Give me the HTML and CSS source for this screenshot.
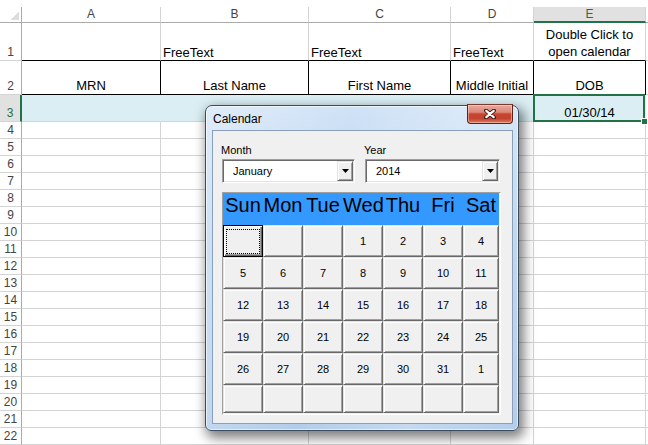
FILE: index.html
```html
<!DOCTYPE html>
<html>
<head>
<meta charset="utf-8">
<title>Calendar</title>
<link rel="stylesheet" href="styles.css">
</head>
<body>
<div class="sheet">
  <div class="corner"></div>
  <div class="ch">A</div><div class="ch">B</div><div class="ch">C</div><div class="ch">D</div><div class="ch csel">E</div><div class="ch f"></div>

  <div class="rh">1</div>
  <div class="c r1"></div>
  <div class="c r1">FreeText</div>
  <div class="c r1">FreeText</div>
  <div class="c r1">FreeText</div>
  <div class="c r1 note">Double Click to<br>open calendar</div>
  <div class="c f"></div>

  <div class="rh">2</div>
  <div class="c r2">MRN</div>
  <div class="c r2">Last Name</div>
  <div class="c r2">First Name</div>
  <div class="c r2">Middle Initial</div>
  <div class="c r2">DOB</div>
  <div class="c f"></div>

  <div class="rh rsel">3</div>
  <div class="c r3"></div>
  <div class="c r3"></div>
  <div class="c r3"></div>
  <div class="c r3"></div>
  <div class="c r3 active">01/30/14<span class="handle"></span></div>
  <div class="c f"></div>

  <div class="rh">4</div><div class="c"></div><div class="c"></div><div class="c"></div><div class="c"></div><div class="c"></div><div class="c f"></div>
  <div class="rh">5</div><div class="c"></div><div class="c"></div><div class="c"></div><div class="c"></div><div class="c"></div><div class="c f"></div>
  <div class="rh">6</div><div class="c"></div><div class="c"></div><div class="c"></div><div class="c"></div><div class="c"></div><div class="c f"></div>
  <div class="rh">7</div><div class="c"></div><div class="c"></div><div class="c"></div><div class="c"></div><div class="c"></div><div class="c f"></div>
  <div class="rh">8</div><div class="c"></div><div class="c"></div><div class="c"></div><div class="c"></div><div class="c"></div><div class="c f"></div>
  <div class="rh">9</div><div class="c"></div><div class="c"></div><div class="c"></div><div class="c"></div><div class="c"></div><div class="c f"></div>
  <div class="rh">10</div><div class="c"></div><div class="c"></div><div class="c"></div><div class="c"></div><div class="c"></div><div class="c f"></div>
  <div class="rh">11</div><div class="c"></div><div class="c"></div><div class="c"></div><div class="c"></div><div class="c"></div><div class="c f"></div>
  <div class="rh">12</div><div class="c"></div><div class="c"></div><div class="c"></div><div class="c"></div><div class="c"></div><div class="c f"></div>
  <div class="rh">13</div><div class="c"></div><div class="c"></div><div class="c"></div><div class="c"></div><div class="c"></div><div class="c f"></div>
  <div class="rh">14</div><div class="c"></div><div class="c"></div><div class="c"></div><div class="c"></div><div class="c"></div><div class="c f"></div>
  <div class="rh">15</div><div class="c"></div><div class="c"></div><div class="c"></div><div class="c"></div><div class="c"></div><div class="c f"></div>
  <div class="rh">16</div><div class="c"></div><div class="c"></div><div class="c"></div><div class="c"></div><div class="c"></div><div class="c f"></div>
  <div class="rh">17</div><div class="c"></div><div class="c"></div><div class="c"></div><div class="c"></div><div class="c"></div><div class="c f"></div>
  <div class="rh">18</div><div class="c"></div><div class="c"></div><div class="c"></div><div class="c"></div><div class="c"></div><div class="c f"></div>
  <div class="rh">19</div><div class="c"></div><div class="c"></div><div class="c"></div><div class="c"></div><div class="c"></div><div class="c f"></div>
  <div class="rh">20</div><div class="c"></div><div class="c"></div><div class="c"></div><div class="c"></div><div class="c"></div><div class="c f"></div>
  <div class="rh">21</div><div class="c"></div><div class="c"></div><div class="c"></div><div class="c"></div><div class="c"></div><div class="c f"></div>
  <div class="rh">22</div><div class="c"></div><div class="c"></div><div class="c"></div><div class="c"></div><div class="c"></div><div class="c f"></div>
</div>

<div class="dlg">
  <div class="titlebar">
    <span class="title">Calendar</span>
    <span class="close">
      <svg width="12" height="10" viewBox="0 0 12 10">
        <path d="M2 1.5 L10 8.5 M10 1.5 L2 8.5" stroke="#3a1a16" stroke-width="4" stroke-linecap="round" fill="none"/>
        <path d="M2.3 1.8 L9.7 8.2 M9.7 1.8 L2.3 8.2" stroke="#fff" stroke-width="2.2" stroke-linecap="round" fill="none"/>
      </svg>
    </span>
  </div>
  <div class="client">
    <div class="fields">
      <div class="field month">
        <div class="lbl">Month</div>
        <div class="combo"><span class="val">January</span><span class="dd"><svg width="7" height="4" viewBox="0 0 7 4"><polygon points="0,0 7,0 3.5,4" fill="#000"/></svg></span></div>
      </div>
      <div class="field year">
        <div class="lbl">Year</div>
        <div class="combo"><span class="val">2014</span><span class="dd"><svg width="7" height="4" viewBox="0 0 7 4"><polygon points="0,0 7,0 3.5,4" fill="#000"/></svg></span></div>
      </div>
    </div>
    <div class="cal">
      <div class="dh">Sun</div><div class="dh">Mon</div><div class="dh">Tue</div><div class="dh">Wed</div><div class="dh">Thu</div><div class="dh">Fri</div><div class="dh">Sat</div>

      <div class="d focus"></div><div class="d"></div><div class="d"></div><div class="d">1</div><div class="d">2</div><div class="d">3</div><div class="d">4</div>
      <div class="d">5</div><div class="d">6</div><div class="d">7</div><div class="d">8</div><div class="d">9</div><div class="d">10</div><div class="d">11</div>
      <div class="d">12</div><div class="d">13</div><div class="d">14</div><div class="d">15</div><div class="d">16</div><div class="d">17</div><div class="d">18</div>
      <div class="d">19</div><div class="d">20</div><div class="d">21</div><div class="d">22</div><div class="d">23</div><div class="d">24</div><div class="d">25</div>
      <div class="d">26</div><div class="d">27</div><div class="d">28</div><div class="d">29</div><div class="d">30</div><div class="d">31</div><div class="d">1</div>
      <div class="d"></div><div class="d"></div><div class="d"></div><div class="d"></div><div class="d"></div><div class="d"></div><div class="d"></div>
    </div>
  </div>
</div>
</body>
</html>
```

FILE: styles.css
```css
html, body {
  margin: 0;
  padding: 0;
}
body {
  width: 648px;
  height: 445px;
  overflow: hidden;
  position: relative;
  background: #fff;
  font-family: "Liberation Sans", Arial, sans-serif;
  color: #000;
}

/* ---------- spreadsheet ---------- */
.sheet {
  margin-top: 7px;
  display: grid;
  grid-template-columns: 22px 139px 148px 142px 83px 112px 1fr;
  grid-template-rows: 16px 38px 34px 27px repeat(19, 17px);
}
.sheet > div {
  box-sizing: border-box;
  border-right: 1px solid #d4d4d4;
  border-bottom: 1px solid #d4d4d4;
  font-size: 13px;
  line-height: 16px;
  white-space: nowrap;
}
.corner {
  border-right-color: #ababab !important;
  border-bottom-color: #ababab !important;
  background: linear-gradient(135deg, transparent 50%, #dcdcdc 50%) no-repeat right 2px bottom 2px / 8px 8px;
}
.ch {
  border-bottom-color: #ababab !important;
  color: #444;
  font-size: 12px !important;
  line-height: 15px !important;
  text-align: center;
}
.ch.csel {
  background: #e1e1e1;
  color: #217346;
  border-bottom: 2px solid #217346 !important;
  line-height: 14px !important;
}
.rh {
  border-right-color: #ababab !important;
  color: #444;
  font-size: 12px !important;
  display: flex;
  align-items: flex-end;
  justify-content: center;
}
.rh.rsel {
  background: #e1e1e1;
  color: #217346;
  border-right: 2px solid #217346 !important;
}
.f {
  border-right: none !important;
}
.c {
  display: flex;
  align-items: flex-end;
  padding: 0 2px;
}
.r1 {
  border-bottom-color: #000 !important;
  line-height: 15px !important;
}
.note {
  justify-content: center;
  text-align: center;
  line-height: 17px !important;
  padding-bottom: 0;
}
.r2 {
  justify-content: center;
  border-right-color: #000 !important;
  border-bottom-color: #000 !important;
}
.r3 {
  background: #daeef3;
  border-right-color: #daeef3 !important;
}
.active {
  position: relative;
  justify-content: center;
}
.active::after {
  content: "";
  position: absolute;
  left: -1px;
  top: -1px;
  right: 0;
  bottom: -1px;
  border: 2px solid #217346;
}
.handle {
  position: absolute;
  right: -3px;
  bottom: -4px;
  width: 5px;
  height: 5px;
  background: #217346;
  border: 1px solid #fff;
  z-index: 2;
}

/* ---------- dialog ---------- */
.dlg {
  position: absolute;
  left: 205px;
  top: 105px;
  width: 314px;
  height: 326px;
  box-sizing: border-box;
  border: 1px solid #3c4c60;
  border-radius: 7px 7px 6px 6px;
  background:
    linear-gradient(100deg, rgba(255,255,255,0.35) 0%, rgba(255,255,255,0) 40%, rgba(255,255,255,0.25) 70%, rgba(255,255,255,0) 100%),
    linear-gradient(to bottom, #cfe2f6 0%, #bcd4ef 40%, #b2cdeb 100%);
  box-shadow: 3px 5px 12px 2px rgba(0, 0, 0, 0.5), inset 0 0 0 1px rgba(255,255,255,0.6);
  padding: 0 5px 6px 6px;
  display: flex;
  flex-direction: column;
}
.titlebar {
  height: 24px;
  flex: none;
  display: flex;
  align-items: center;
}
.title {
  font-size: 12px;
  padding-left: 1px;
  padding-top: 2px;
}
.close {
  margin-left: auto;
  align-self: flex-start;
  margin-top: -2px;
  width: 46px;
  height: 20px;
  box-sizing: border-box;
  border: 1px solid #5b231b;
  border-top-color: #7a3a30;
  border-radius: 0 0 4px 4px;
  background: linear-gradient(to bottom, #e9aa9d 0%, #dc8878 40%, #c8442f 50%, #c44330 75%, #dc7a62 100%);
  box-shadow: inset 0 0 0 1px rgba(255, 230, 220, 0.45);
  display: flex;
  align-items: center;
  justify-content: center;
}
.close svg {
  display: block;
}
.client {
  flex: 1;
  box-sizing: border-box;
  background: #f0f0f0;
  border: 1px solid #8a9fb8;
  padding: 12px 0 0 9px;
  font-size: 11px;
}
.fields {
  display: flex;
  gap: 10px;
}
.month {
  width: 133px;
}
.year {
  width: 135px;
}
.lbl {
  height: 14px;
  line-height: 14px;
  margin-left: -1px;
  margin-bottom: 2px;
}
.combo {
  height: 24px;
  box-sizing: border-box;
  border: 1px solid;
  border-color: #a0a0a0 #fff #fff #a0a0a0;
  box-shadow: inset 1px 1px #696969, inset -1px -1px #e3e3e3;
  background: #fff;
  display: flex;
  padding: 1px;
}
.val {
  flex: 1;
  padding-left: 9px;
  line-height: 20px;
}
.dd {
  width: 16px;
  box-sizing: border-box;
  background: #f0f0f0;
  border: 1px solid;
  border-color: #e3e3e3 #696969 #696969 #e3e3e3;
  box-shadow: inset 1px 1px #fff, inset -1px -1px #a0a0a0;
  display: flex;
  align-items: center;
  justify-content: center;
}
.dd svg {
  display: block;
}
.cal {
  margin-top: 9px;
  width: 279px;
  height: 223px;
  box-sizing: border-box;
  border: 1px solid;
  border-color: #a0a0a0 #fff #fff #a0a0a0;
  display: grid;
  grid-template-columns: repeat(6, 40px) 36px;
  grid-template-rows: repeat(6, 32px) 28px;
}
.dh {
  background: #3399ff;
  font-size: 20px;
  line-height: 24px;
  text-align: center;
  color: #000;
}
.d {
  box-sizing: border-box;
  background: #f0f0f0;
  border: 1px solid;
  border-color: #e3e3e3 #696969 #696969 #e3e3e3;
  box-shadow: inset 1px 1px #fff, inset -1px -1px #a0a0a0;
  display: flex;
  align-items: center;
  justify-content: center;
  font-size: 11px;
}
.d.focus {
  border-color: #000;
  box-shadow: inset 1px 1px #fff, inset -1px -1px #696969, inset -2px -2px #a0a0a0;
}
.d.focus::before {
  content: "";
  width: 32px;
  height: 23px;
  border: 1px dotted #000;
}
```
